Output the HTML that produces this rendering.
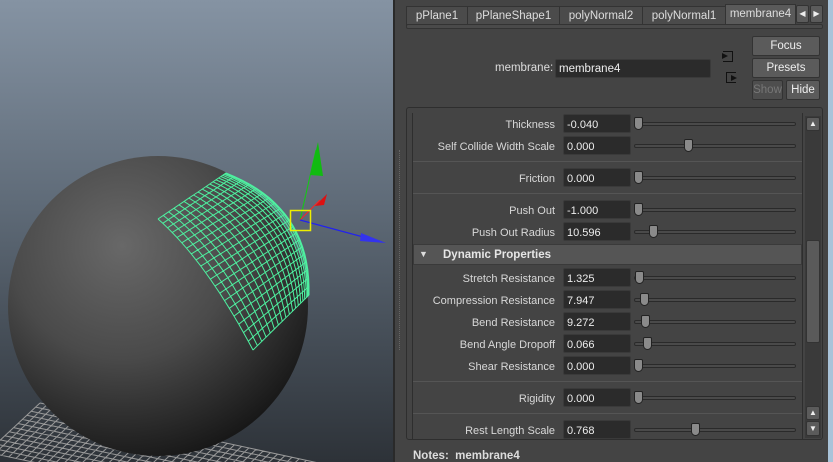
<!DOCTYPE html>
<html><head><meta charset="utf-8"><style>
*{box-sizing:border-box;margin:0;padding:0}
body{width:833px;height:462px;overflow:hidden;background:#444;font-family:"Liberation Sans",sans-serif;font-size:11px;color:#ddd;position:relative}
.a{position:absolute}
.tab{position:absolute;top:6px;height:20px;background:#4b4b4b;border:1px solid #333;border-bottom:none;color:#ddd;text-align:center;line-height:19px;font-size:11.5px}
.lbl{position:absolute;right:278px;width:200px;text-align:right;font-size:11px;color:#d8d8d8}
.fld{position:absolute;left:563px;width:68px;height:19px;background:#2b2b2b;border:1px solid #3a3a3a;border-radius:2px;color:#eee;padding-left:3px;line-height:20px;font-size:11px}
.trk{position:absolute;left:634px;width:162px;height:4px;border:1px solid #2a2a2a;background:#4a4a4a;border-radius:2px}
.hnd{position:absolute;width:9px;height:13px;background:#8a8a8a;border:1px solid #222;border-radius:2px 2px 5px 5px}
.sep{position:absolute;left:413px;width:389px;height:1px;background:#2f2f2f;border-bottom:1px solid #555}
.btn{position:absolute;background:#5b5b5b;border:1px solid #333;border-radius:2px;text-align:center;line-height:18px;color:#eee;font-size:11.5px}
</style></head><body>
<svg class="a" style="left:0;top:0" width="395" height="462">
<defs>
<linearGradient id="bg" x1="0" y1="0" x2="0" y2="1"><stop offset="0" stop-color="#8593a3"/><stop offset="0.45" stop-color="#5e6a77"/><stop offset="1" stop-color="#2d3238"/></linearGradient>
<radialGradient id="sp" cx="0.38" cy="0.3" r="0.75"><stop offset="0" stop-color="#686868"/><stop offset="0.5" stop-color="#4a4a4a"/><stop offset="1" stop-color="#151515"/></radialGradient>
</defs>
<rect width="395" height="462" fill="url(#bg)"/>
<g id="floor" stroke="#9a9a9a" stroke-width="1" fill="none"></g>
<circle cx="158" cy="306" r="150" fill="url(#sp)"/>
<g id="mesh" stroke="#4ef0a0" stroke-width="1" fill="none"></g>
<line x1="300" y1="220" x2="316" y2="150" stroke="#1c1" stroke-width="1"/>
<polygon points="310,175 318,142 323,176" fill="#1b1"/>
<line x1="300" y1="220" x2="320" y2="200" stroke="#f22"/>
<polygon points="315,206 327,194 324,205" fill="#d11"/>
<line x1="300" y1="220" x2="382" y2="242" stroke="#22e" stroke-width="1.2"/>
<polygon points="361,233 386,243 360,241" fill="#33e"/>
<rect x="290.5" y="210.5" width="20" height="20" fill="none" stroke="#ee0" stroke-width="1.5"/>
<rect x="393" y="0" width="2" height="462" fill="#2a2a2a"/>
</svg>
<script>
(function(){
var ns="http://www.w3.org/2000/svg";
var m=document.getElementById("mesh");
var A=[158,219],B=[226,173],C=[309,295],D=[253,350],oBC=[22,-14],oAD=[0,-12];
function P(u,v){u=Math.sin(u*Math.PI/2);var x=(1-u)*(1-v)*A[0]+u*(1-v)*B[0]+u*v*C[0]+(1-u)*v*D[0];var y=(1-u)*(1-v)*A[1]+u*(1-v)*B[1]+u*v*C[1]+(1-u)*v*D[1];var w=4*v*(1-v);x+=w*(u*oBC[0]+(1-u)*oAD[0]);y+=w*(u*oBC[1]+(1-u)*oAD[1]);return x.toFixed(1)+","+y.toFixed(1);}
var N=20,d="";
for(var i=0;i<=N;i++){var s="M";for(var j=0;j<=N;j++){s+=P(i/N,j/N)+(j<N?" L":"");}d+=s+" ";s="M";for(var j=0;j<=N;j++){s+=P(j/N,i/N)+(j<N?" L":"");}d+=s+" ";}
var p=document.createElementNS(ns,"path");p.setAttribute("d",d);m.appendChild(p);
var f=document.getElementById("floor");var O=[40,403],e1=[7.2,1.55],e2=[-4.4,4.1],g="";
for(var k=0;k<=40;k++){g+="M"+(O[0]+k*e1[0])+","+(O[1]+k*e1[1])+" l"+(12*e2[0])+","+(12*e2[1])+" ";}
for(var k=0;k<=12;k++){g+="M"+(O[0]+k*e2[0])+","+(O[1]+k*e2[1])+" l"+(40*e1[0])+","+(40*e1[1])+" ";}
var q=document.createElementNS(ns,"path");q.setAttribute("d",g);f.appendChild(q);
})();
</script>
<div class="a" style="left:828px;top:0;width:5px;height:462px;background:#a9c3d9"></div>
<div class="a" style="left:399px;top:150px;width:2px;height:200px;border-left:1px dotted #666"></div>
<div class="tab" style="left:406px;width:62px">pPlane1</div>
<div class="tab" style="left:467px;width:93px">pPlaneShape1</div>
<div class="tab" style="left:559px;width:84px">polyNormal2</div>
<div class="tab" style="left:642px;width:84px">polyNormal1</div>
<div class="tab" style="left:725px;width:71px;top:4px;height:22px;background:#5a5a5a">membrane4</div>
<div class="btn" style="left:796px;top:5px;width:13px;height:18px;line-height:16px;font-size:8px">◀</div>
<div class="btn" style="left:810px;top:5px;width:13px;height:18px;line-height:16px;font-size:8px">▶</div>
<div class="a" style="left:406px;top:24px;width:417px;height:5px;border:1px solid #333;border-radius:2px;background:#4a4a4a"></div>
<div class="a" style="left:495px;top:62px;font-size:11.5px">membrane:</div>
<div class="a" style="left:555px;top:59px;width:156px;height:19px;background:#2b2b2b;border:1px solid #3a3a3a;border-radius:2px;padding-left:3px;line-height:19px;font-size:11.5px;color:#eee">membrane4</div>
<div class="a" style="left:723px;top:51px;width:10px;height:11px;border:1px solid #111;border-left:none"></div>
<div class="a" style="left:722px;top:53px;width:0;height:0;border-left:6px solid #111;border-top:3px solid transparent;border-bottom:3px solid transparent"></div>
<div class="a" style="left:726px;top:72px;width:10px;height:11px;border:1px solid #111;border-right:none"></div>
<div class="a" style="left:731px;top:75px;width:0;height:0;border-left:6px solid #111;border-top:3px solid transparent;border-bottom:3px solid transparent"></div>
<div class="btn" style="left:752px;top:36px;width:68px;height:20px">Focus</div>
<div class="btn" style="left:752px;top:58px;width:68px;height:20px">Presets</div>
<div class="btn" style="left:752px;top:80px;width:31px;height:20px;color:#777;background:#4e4e4e">Show</div>
<div class="btn" style="left:786px;top:80px;width:34px;height:20px">Hide</div>
<div class="a" style="left:406px;top:107px;width:417px;height:333px;border:1px solid #2e2e2e;border-radius:3px;background:#444"></div>
<div class="a" style="left:412px;top:113px;width:391px;height:326px;border-left:1px solid #2e2e2e;border-right:1px solid #2e2e2e"></div>
<div class="a" style="left:805px;top:116px;width:16px;height:322px;background:#3a3a3a"></div>
<div class="btn" style="left:806px;top:117px;width:14px;height:14px;line-height:12px;font-size:8px">▲</div>
<div class="a" style="left:806px;top:240px;width:14px;height:103px;background:#5a5a5a;border:1px solid #333;border-radius:2px"></div>
<div class="btn" style="left:806px;top:406px;width:14px;height:14px;line-height:12px;font-size:8px">▲</div>
<div class="btn" style="left:806px;top:421px;width:14px;height:15px;line-height:13px;font-size:8px">▼</div>
<div class="sep" style="top:161px"></div>
<div class="sep" style="top:193px"></div>
<div class="a" style="left:413px;top:244px;width:389px;height:21px;background:#555;border:1px solid #3a3a3a"></div>
<div class="a" style="left:419px;top:249px;font-size:9px;color:#ddd">▼</div>
<div class="a" style="left:443px;top:249px;font-weight:bold;font-size:11.5px;color:#e6e6e6">Dynamic Properties</div>
<div class="sep" style="top:381px"></div>
<div class="sep" style="top:413px"></div>
<div id="rows"></div>
<script>
var R=[["Thickness","-0.040",124,639],["Self Collide Width Scale","0.000",146,689],["Friction","0.000",178,639],["Push Out","-1.000",210,639],["Push Out Radius","10.596",232,654],["Stretch Resistance","1.325",278,640],["Compression Resistance","7.947",300,645],["Bend Resistance","9.272",322,646],["Bend Angle Dropoff","0.066",344,648],["Shear Resistance","0.000",366,639],["Rigidity","0.000",398,639],["Rest Length Scale","0.768",430,696]];
var h="";R.forEach(function(r){var y=r[2];h+='<div class="lbl" style="top:'+(y-5)+'px">'+r[0]+'</div><div class="fld" style="top:'+(y-10)+'px">'+r[1]+'</div><div class="trk" style="top:'+(y-2)+'px"></div><div class="hnd" style="left:'+(r[3]-5)+'px;top:'+(y-7)+'px"></div>';});
document.getElementById("rows").innerHTML=h;
</script>
<div class="a" style="left:413px;top:450px;height:12px;line-height:12px;overflow:hidden;font-weight:bold;font-size:11.5px;color:#ddd">Notes:&nbsp; membrane4</div>
</body></html>
